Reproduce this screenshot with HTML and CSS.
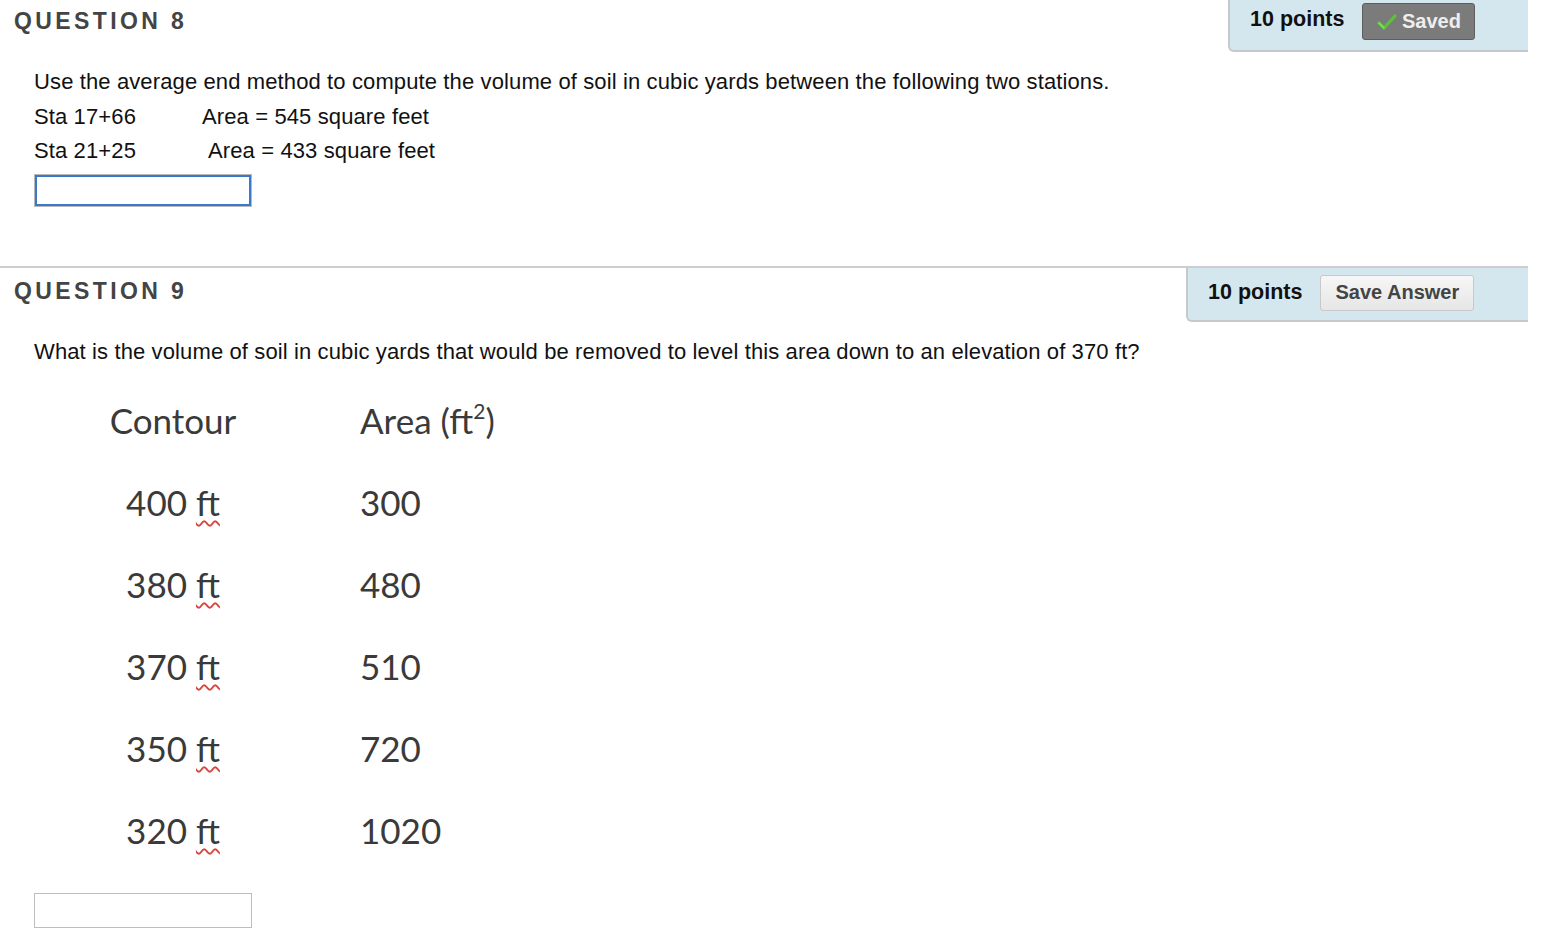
FILE: index.html
```html
<!DOCTYPE html>
<html>
<head>
<meta charset="utf-8">
<link rel="stylesheet" href="styles.css">
</head>
<body>
<div class="page">
  <section class="question q8">
    <div class="q-header">
      <h2 class="q-title">QUESTION 8</h2>
      <div class="points-box pb8">
        <span class="points">10 points</span>
        <button class="btn-saved"><svg class="check" width="20" height="16" viewBox="0 0 20 16"><path d="M2 9 L7 14 L18 2" fill="none" stroke="#5cc23a" stroke-width="3.2" stroke-linecap="round" stroke-linejoin="round"/><path d="M2 9 L7 14" fill="none" stroke="#8be06a" stroke-width="1.2" stroke-linecap="round"/></svg>Saved</button>
      </div>
    </div>
    <div class="q-body">
      <p class="line">Use the average end method to compute the volume of soil in cubic yards between the following two stations.</p>
      <p class="line"><span class="sta">Sta 17+66</span><span class="area">Area = 545 square feet</span></p>
      <p class="line"><span class="sta">Sta 21+25</span><span class="area area2">Area = 433 square feet</span></p>
      <div class="answer focused"></div>
    </div>
  </section>

  <section class="question q9">
    <div class="q-header">
      <h2 class="q-title t9">QUESTION 9</h2>
      <div class="points-box pb9">
        <span class="points">10 points</span>
        <button class="btn-save">Save Answer</button>
      </div>
    </div>
    <div class="q-body">
      <p class="line">What is the volume of soil in cubic yards that would be removed to level this area down to an elevation of 370 ft?</p>
      <div class="contour-table">
        <div class="c1">Contour</div><div class="c2">Area (ft<sup>2</sup>)</div>
        <div class="c1">400 <span class="sq">ft</span></div><div class="c2">300</div>
        <div class="c1">380 <span class="sq">ft</span></div><div class="c2">480</div>
        <div class="c1">370 <span class="sq">ft</span></div><div class="c2">510</div>
        <div class="c1">350 <span class="sq">ft</span></div><div class="c2">720</div>
        <div class="c1">320 <span class="sq">ft</span></div><div class="c2">1020</div>
      </div>
      <div class="answer plain"></div>
    </div>
  </section>
</div>
</body>
</html>
```

FILE: styles.css
```css
html, body {
  margin: 0;
  padding: 0;
  background: #fff;
}
body {
  font-family: "Liberation Sans", Arial, Helvetica, sans-serif;
  color: #111;
}
.page {
  width: 1528px;
}
.question {
  display: flex;
  flex-direction: column;
}
.q-header {
  display: flex;
  justify-content: space-between;
  align-items: flex-start;
}
.q-title {
  margin: 8px 0 0 14px;
  font-size: 23px;
  line-height: 26px;
  font-weight: bold;
  letter-spacing: 3.4px;
  color: #444;
}
.points-box {
  display: flex;
  align-items: center;
  background: #d5e7ee;
  border-left: 2px solid #c6c9ca;
  border-bottom: 2px solid #c6c9ca;
  border-bottom-left-radius: 6px;
  box-sizing: border-box;
}
.pb8 {
  width: 300px;
  height: 52px;
  padding: 3px 0 10px 20px;
  align-items: flex-start;
}
.points {
  font-weight: bold;
  font-size: 21.5px;
  color: #111;
}
.pb8 .points {
  margin-top: 4px;
}
.btn-saved {
  margin-left: 18px;
  width: 113px;
  height: 37px;
  background: #7b7b7b;
  border: 1px solid #5e5e5e;
  border-radius: 3px;
  color: #eeeeee;
  font-family: "Liberation Sans", Arial, sans-serif;
  font-weight: bold;
  font-size: 20px;
  display: flex;
  align-items: center;
  justify-content: center;
  gap: 5px;
  padding: 0;
}
.check {
  display: block;
}
.q-body {
  padding-left: 34px;
  margin-top: 13px;
}
.line {
  margin: 0;
  font-size: 22px;
  letter-spacing: 0.12px;
  line-height: 34.5px;
  color: #111;
  white-space: nowrap;
}
.sta {
  display: inline-block;
  width: 168px;
}
.area2 {
  margin-left: 6px;
}
.answer {
  box-sizing: border-box;
  width: 218px;
}
.answer.focused {
  margin-top: 5px;
  height: 33px;
  border: 1px solid #b9b9b9;
  box-shadow: inset 0 0 0 2px #3a78c9;
}
.q9 {
  margin-top: 59px;
  border-top: 2px solid #cdcdcd;
}
.t9 {
  margin-top: 10px;
}
.pb9 {
  width: 342px;
  height: 54px;
  padding: 0 0 2px 20px;
}
.btn-save {
  margin-left: 18px;
  width: 154px;
  height: 36px;
  background: linear-gradient(#f7f7f7, #e6e6e6);
  border: 1px solid #c9c9c9;
  border-radius: 3px;
  color: #444;
  font-family: "Liberation Sans", Arial, sans-serif;
  font-weight: bold;
  font-size: 20px;
  padding: 0;
}
.contour-table {
  margin-top: 10px;
  margin-left: 56px;
  display: grid;
  grid-template-columns: 166px 270px;
  column-gap: 104px;
  grid-auto-rows: 82px;
  font-family: Lato, "Open Sans", sans-serif;
  font-size: 35px;
  color: #3a3a3a;
  align-items: center;
  width: 540px;
}
.contour-table sup {
  font-size: 21px;
  line-height: 0;
  vertical-align: 15px;
}
.c1 {
  text-align: center;
}
.c2 {
  text-align: left;
}
.sq {
  text-decoration: underline wavy #d8473f;
  text-decoration-thickness: 1.5px;
  text-underline-offset: 4px;
}
.answer.plain {
  margin-top: 22px;
  height: 35px;
  border: 1px solid #bdbdbd;
}
```
